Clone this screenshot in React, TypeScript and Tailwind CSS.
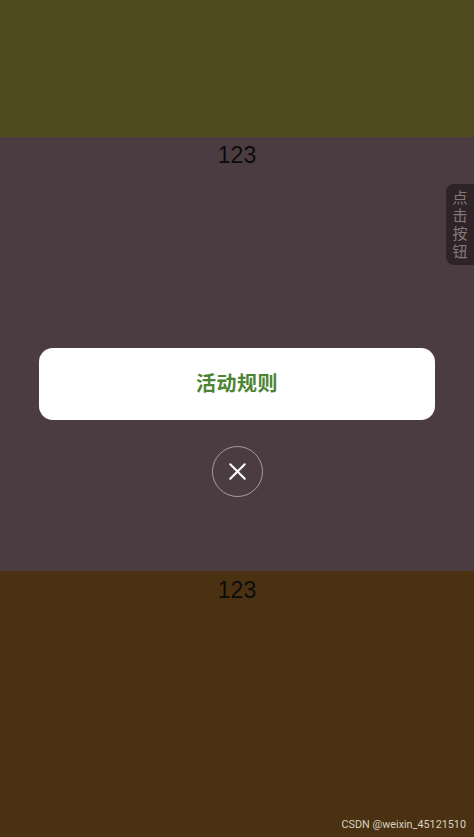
import { X } from "lucide-react"

const font = { fontFamily: '"Liberation Sans", "Noto Sans CJK SC", sans-serif' }

export default function App() {
  return (
    <div className="relative w-[474px] h-[837px] overflow-hidden flex flex-col" style={font}>
      {/* top band */}
      <div className="h-[137px] bg-[#4f4b1e]" />

      {/* mask + rule popup */}
      <div className="h-[434px] bg-[#4b3c42] flex flex-col items-center">
        <div className="text-[23px] leading-[36px] text-[#0c0c0c]">123</div>
        <div className="mt-[175px] w-[396px] h-[72px] bg-white rounded-[14px] flex items-center justify-center">
          <span className="text-[20px] font-bold text-[#4b8533] tracking-[0.5px]">活动规则</span>
        </div>
        <button className="mt-[26px] w-[51px] h-[51px] rounded-full border-[1.5px] border-[#aa9da1] flex items-center justify-center">
          <X className="w-[29px] h-[29px] text-white" strokeWidth={1.7} />
        </button>
      </div>

      {/* bottom band */}
      <div className="flex-1 bg-[#4a3111] flex flex-col items-center">
        <div className="text-[23px] leading-[36px] text-[#0c0c0c] mt-[1px]">123</div>
      </div>

      {/* side button */}
      <div className="absolute right-[-6px] top-[184px] w-[34px] h-[81px] rounded-l-[8px] bg-[#2e2427] flex flex-col items-center justify-center pr-[6px]">
        <span className="text-[15px] leading-[18px] text-[#85797b] w-[15px] text-center">点击按钮</span>
      </div>

      {/* watermark */}
      <div
        className="absolute right-[8px] bottom-[4px] text-[10.8px] text-[#d9d1c1]"
        style={{ fontFamily: 'Roboto, sans-serif' }}
      >
        CSDN @weixin_45121510
      </div>
    </div>
  )
}
